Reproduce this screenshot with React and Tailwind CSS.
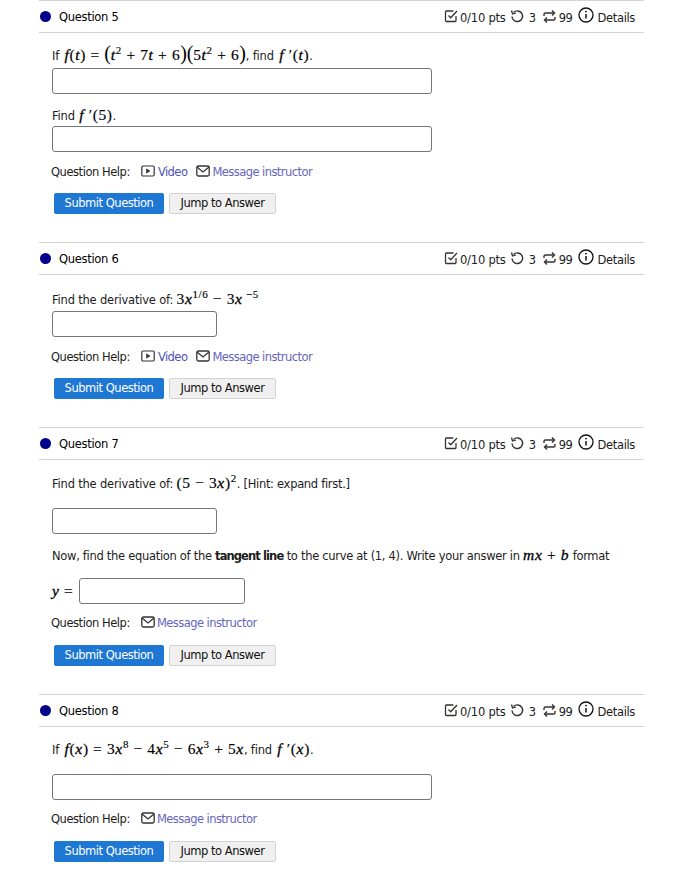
import React from "react";

const M = ({ children }) => <span className="font-['Liberation_Serif',serif] text-[15.500px] text-black tracking-[0.6px] [-webkit-text-stroke:0.15px_#000]">{children}</span>;
const V = ({ children }) => <i className="font-['Liberation_Serif',serif] text-[15.500px] text-black tracking-[0.7px] [-webkit-text-stroke:0.3px_#000]">{children}</i>;
const Big = ({ children }) => <span className="font-['Liberation_Serif',serif] text-[20px] leading-none text-black">{children}</span>;
const Sup = ({ children }) => <sup className="relative top-[-6px] align-baseline font-['Liberation_Serif',serif] text-[11px] leading-none tracking-[0.6px] text-black [-webkit-text-stroke:0.15px_#000]">{children}</sup>;

const CheckIco = () => (
  <svg width="14" height="14" viewBox="0 0 14 14" fill="none" stroke="#333" strokeWidth="1.3"><path d="M12 7v4.600c0 .5-.4.9-.9.9H2.400c-.5 0-.9-.4-.9-.9V2.900c0-.5.4-.9.9-.9h7" /><path d="M4.500 6.500l2.200 2.200L13 2" /></svg>
);
const RetryIco = () => (
  <svg width="14" height="14" viewBox="0 0 14 14" fill="none" stroke="#333" strokeWidth="1.4"><path d="M3.500 3.500A5.300 5.300 0 1 1 2 7.500" /><path d="M1.500 1.500l1 3.500 3.500-1" strokeWidth="1.300" /></svg>
);
const RepeatIco = () => (
  <svg width="15" height="15" viewBox="0 0 15 15" fill="none" stroke="#333" strokeWidth="1.4"><path d="M2 7V5.500C2 4.500 2.800 4 3.500 4H12" /><path d="M10 1.500L12.500 4 10 6.500" /><path d="M13 8v1.500c0 1-.8 1.500-1.500 1.500H3" /><path d="M5 8.500L2.500 11 5 13.500" /></svg>
);
const InfoIco = () => (
  <svg width="16" height="16" viewBox="0 0 16 16" fill="none" stroke="#111" strokeWidth="1.300"><circle cx="8" cy="8" r="7" /><path d="M8 7v4.500" strokeWidth="1.500" /><circle cx="8" cy="4.600" r=".9" fill="#111" stroke="none" /></svg>
);
const VideoIco = () => (
  <svg width="14" height="12" viewBox="0 0 14 12" fill="none" stroke="#333" strokeWidth="1.200"><rect x=".8" y="1" width="12.400" height="10" rx="1.200" /><path d="M5.500 3.800v4.400L9 6z" fill="#333" strokeWidth=".6" /></svg>
);
const MailIco = () => (
  <svg width="14" height="12" viewBox="0 0 14 12" fill="none" stroke="#333" strokeWidth="1.300"><rect x=".8" y="1" width="12.400" height="10" rx="1.500" /><path d="M1 2l6 5 6-5" /></svg>
);

const Input = ({ w }) => (
  <div className={`${w} h-[26px] shrink-0 rounded-[3px] border border-[#767676] bg-white`} />
);

const Header = ({ n }) => (
  <div className="flex h-[33px] items-center justify-between border-y border-[#d3d3d3] pl-[1px] pr-[9px]">
    <div className="flex items-center">
      <span className="h-[11px] w-[11px] rounded-full bg-[#00008b]" />
      <span className="ml-[8px] pt-[2px] font-medium tracking-[-0.3px] text-black">Question {n}</span>
    </div>
    <div className="flex items-center pt-[1px] text-[#1c1c1c]">
      <span className="-mt-[2px]"><CheckIco /></span>
      <span className="ml-[2px] pt-[4px] tracking-[-0.2px]">0/10 pts</span>
      <span className="ml-[4px] -mt-[2px]"><RetryIco /></span>
      <span className="ml-[5px] pt-[4px]">3</span>
      <span className="ml-[6px] -mt-[2px]"><RepeatIco /></span>
      <span className="ml-[2px] pt-[4px]">99</span>
      <span className="ml-[5px] -mt-[4px]"><InfoIco /></span>
      <span className="ml-[4px] pt-[4px]">Details</span>
    </div>
  </div>
);

const Help = ({ video, mt }) => (
  <div className={`${mt} flex h-[18px] items-center pl-[12px] tracking-[-0.45px]`}>
    <span className="pt-[3px] text-[#1c1c1c]">Question Help:</span>
    {video && (
      <span className="ml-[11px] flex items-center">
        <VideoIco />
        <span className="ml-[3px] pt-[3px] tracking-[-0.55px] text-[#4f4fb5]">Video</span>
      </span>
    )}
    <span className={`${video ? "ml-[9px]" : "ml-[11px]"} flex items-center`}>
      <MailIco />
      <span className="ml-[2px] pt-[3px] tracking-[-0.55px] text-[#6565bd]">Message instructor</span>
    </span>
  </div>
);

const Buttons = ({ mt }) => (
  <div className={`${mt} flex items-center gap-[5px] pl-[15px] tracking-[-0.47px]`}>
    <div className="flex h-[21px] w-[110px] items-center justify-center rounded-[2px] bg-[#1f77d4] font-medium text-white">Submit Question</div>
    <div className="flex h-[21px] w-[107px] items-center justify-center rounded-[2px] border border-[#d3d3d3] bg-[#f0f0f0] text-[#111]">Jump to Answer</div>
  </div>
);

const Line = ({ children, mt }) => (
  <div className={`${mt} h-[20px] whitespace-pre pl-[13px] leading-[20px] tracking-[-0.2px] text-[#1c1c1c]`}>{children}</div>
);

export default function App() {
  return (
    <div className="min-h-[889px] w-[692px] bg-white pl-[39px] font-['DejaVu_Sans',sans-serif] text-[11.500px] tracking-[-0.35px]">
      <div className="w-[605px]">
        <Header n={5} />
        <Line mt="mt-[10px]">
          <span className="mr-[2px]">If </span><V>f</V><M>(</M><V>t</V><M>) = </M><Big>(</Big><V>t</V><Sup>2</Sup><M> + 7</M><V>t</V><M> + 6</M><Big>)(</Big><M>5</M><V>t</V><Sup>2</Sup><M> + 6</M><Big>)</Big><span className="mr-[2px]">, find </span><V>f</V><M> ′(</M><V>t</V><M>)</M><span>.</span>
        </Line>
        <div className="mt-[5px] pl-[13px]"><Input w="w-[380px]" /></div>
        <Line mt="mt-[11px]"><span className="mr-[1px]">Find </span><V>f</V><M> ′(5)</M><span>.</span></Line>
        <div className="mt-[1px] pl-[13px]"><Input w="w-[380px]" /></div>
        <Help video mt="mt-[10px]" />
        <Buttons mt="mt-[13px]" />

        <div className="mt-[28px]"><Header n={6} /></div>
        <Line mt="mt-[14px]">
          <span>Find the derivative of: </span><M>3</M><V>x</V><Sup>1/6</Sup><M> − 3</M><V>x</V><Sup> −5</Sup>
        </Line>
        <div className="mt-[2px] pl-[13px]"><Input w="w-[165px]" /></div>
        <Help video mt="mt-[10px]" />
        <Buttons mt="mt-[13px]" />

        <div className="mt-[28px]"><Header n={7} /></div>
        <Line mt="mt-[13px]">
          <span>Find the derivative of: </span><M>(5 − 3</M><V>x</V><M>)</M><Sup>2</Sup><span className="tracking-[-0.3px]">. [Hint: expand first.]</span>
        </Line>
        <div className="mt-[15px] pl-[13px]"><Input w="w-[165px]" /></div>
        <Line mt="mt-[11px]">
          <span className="tracking-[-0.3px]">Now, find the equation of the </span><span className="font-bold tracking-[-0.9px]">tangent line</span><span className="tracking-[-0.3px]"> to the curve at (1, 4). Write your answer in </span><V>mx</V><M> + </M><V>b</V><span className="tracking-[-0.3px]"> format</span>
        </Line>
        <div className="mt-[13px] flex items-center pl-[13px]">
          <span className="w-[27px]"><V>y</V><M> =</M></span>
          <Input w="w-[166px]" />
        </div>
        <Help mt="mt-[9px]" />
        <Buttons mt="mt-[14px]" />

        <div className="mt-[28px]"><Header n={8} /></div>
        <Line mt="mt-[12px]">
          <span className="mr-[2px]">If </span><V>f</V><M>(</M><V>x</V><M>) = 3</M><V>x</V><Sup>8</Sup><M> − 4</M><V>x</V><Sup>5</Sup><M> − 6</M><V>x</V><Sup>3</Sup><M> + 5</M><V>x</V><span className="mr-[2px]">, find </span><V>f</V><M> ′(</M><V>x</V><M>)</M><span>.</span>
        </Line>
        <div className="mt-[15px] pl-[13px]"><Input w="w-[380px]" /></div>
        <Help mt="mt-[9px]" />
        <Buttons mt="mt-[14px]" />
      </div>
    </div>
  );
}
